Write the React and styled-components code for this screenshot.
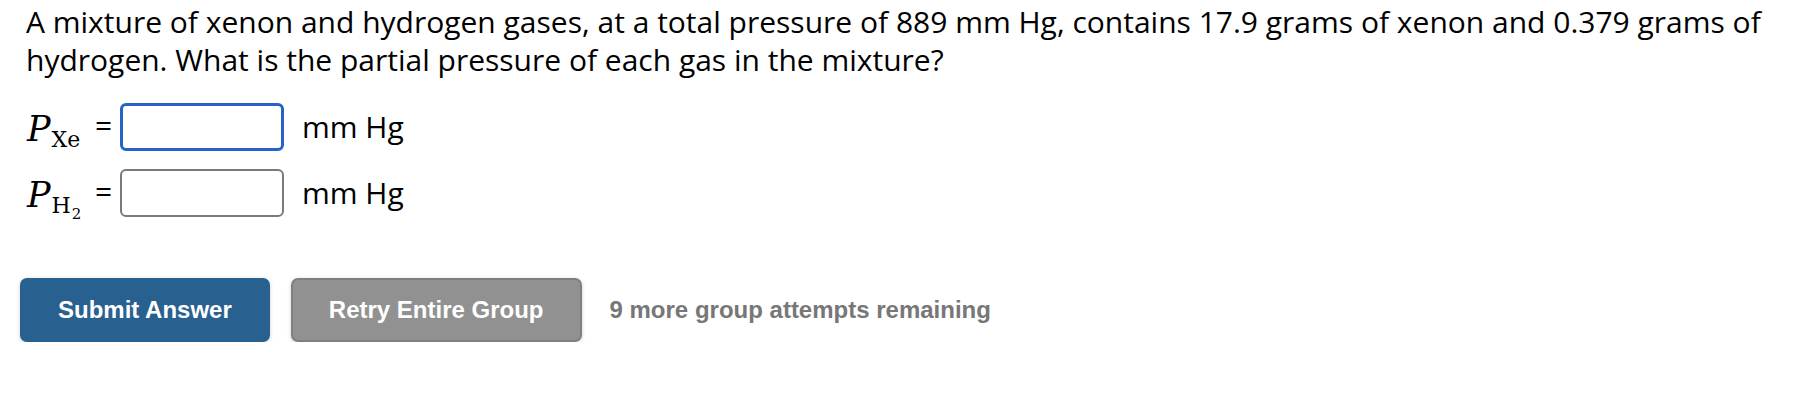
import React from "react";
import styled, { createGlobalStyle } from "styled-components";

const GlobalStyle = createGlobalStyle`
  html, body {
    margin: 0;
    padding: 0;
    background: #ffffff;
  }
`;

const answers = [
  { id: "xe", sub: "Xe", focused: true },
  { id: "h2", sub: "H", subNum: "2", focused: false },
];

function App() {
  return (
    <Page>
      <GlobalStyle />
      <Question>
        A mixture of xenon and hydrogen gases, at a total pressure of 889 mm
        Hg, contains 17.9 grams of xenon and 0.379 grams of hydrogen. What is
        the partial pressure of each gas in the mixture?
      </Question>
      <AnswerList>
        {answers.map((a) => (
          <AnswerRow key={a.id}>
            <MathLabel>
              <MathVar>P</MathVar>
              <MathSub>
                {a.sub}
                {a.subNum ? <MathSubSub>{a.subNum}</MathSubSub> : null}
              </MathSub>
            </MathLabel>
            <Equals>=</Equals>
            <AnswerInput type="text" focused={a.focused} />
            <Unit>mm Hg</Unit>
          </AnswerRow>
        ))}
      </AnswerList>
      <ButtonBar>
        <ActionButton variant="primary">Submit Answer</ActionButton>
        <ActionButton variant="secondary">Retry Entire Group</ActionButton>
        <Attempts>9 more group attempts remaining</Attempts>
      </ButtonBar>
    </Page>
  );
}

const Page = styled.div`
  padding: 3px 20px 0 20px;
  font-family: "Open Sans", "Noto Sans", sans-serif;
  color: #000;
`;

const Question = styled.div`
  padding-left: 6px;
  font-size: 30px;
  line-height: 38px;
`;

const AnswerList = styled.div`
  display: flex;
  flex-direction: column;
  gap: 18px;
  margin-top: 24px;
  padding-left: 7px;
`;

const AnswerRow = styled.div`
  display: flex;
  align-items: center;
  height: 48px;
`;

const MathLabel = styled.span`
  display: inline-flex;
  align-items: baseline;
  width: 68px;
  font-family: "DejaVu Serif", "Liberation Serif", serif;
  margin-top: 4px;
`;

const MathVar = styled.span`
  font-style: italic;
  font-size: 35px;
  line-height: 1;
  margin-right: 1px;
`;

const MathSub = styled.span`
  font-size: 22px;
  position: relative;
  top: 6px;
  line-height: 1;
`;

const MathSubSub = styled.span`
  font-size: 15px;
  position: relative;
  top: 6px;
  margin-left: 1px;
`;

const Equals = styled.span`
  font-size: 30px;
  line-height: 1;
  width: 25px;
  margin-top: -4px;
`;

const AnswerInput = styled.input`
  box-sizing: border-box;
  width: 164px;
  height: 48px;
  margin: 0;
  padding: 0 8px;
  background: #fff;
  border: ${(p) => (p.focused ? "3px solid #2463c9" : "2px solid #7a7a7a")};
  border-radius: 6px;
  outline: none;
  font-size: 24px;
`;

const Unit = styled.span`
  margin-left: 18px;
  font-size: 30px;
  line-height: 1;
`;

const ButtonBar = styled.div`
  display: flex;
  align-items: center;
  margin-top: 61px;
`;

const ActionButton = styled.button`
  box-sizing: border-box;
  height: 64px;
  padding: 0 36px;
  margin: 0 21px 0 0;
  border-radius: 7px;
  font-family: "Liberation Sans", Arial, sans-serif;
  font-weight: bold;
  font-size: 24px;
  color: #fff;
  cursor: pointer;
  background: ${(p) => (p.variant === "primary" ? "#28608f" : "#919191")};
  border: 2px solid
    ${(p) => (p.variant === "primary" ? "#28608f" : "#7f7f7f")};
  box-shadow: 0 1px 4px rgba(0, 0, 0, 0.18);
`;

const Attempts = styled.span`
  margin-left: 7px;
  font-family: "Liberation Sans", Arial, sans-serif;
  font-weight: bold;
  font-size: 24px;
  color: #777777;
`;

export default App;
